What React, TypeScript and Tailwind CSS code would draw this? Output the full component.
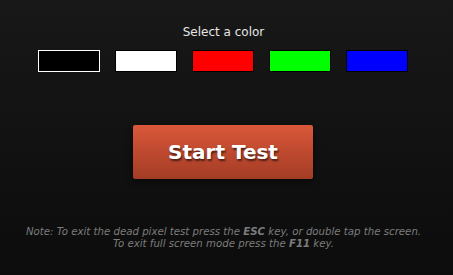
import React from "react";

export default function App() {
  const swatches = [
    { c: "bg-[#000000]", b: "border-white" },
    { c: "bg-[#ffffff]", b: "border-black" },
    { c: "bg-[#ff0000]", b: "border-black" },
    { c: "bg-[#00ff00]", b: "border-black" },
    { c: "bg-[#0000ff]", b: "border-black" },
  ];
  return (
    <div
      className="w-[453px] h-[275px] bg-gradient-to-b from-[#181818] to-[#0c0c0c] flex flex-col items-center"
      style={{ fontFamily: '"DejaVu Sans", Verdana, sans-serif' }}
    >
      <div className="mt-[24px] text-[12px] leading-[16px] text-[#e6e6e6] pr-[6px]">Select a color</div>
      <div className="mt-[10px] flex gap-[15px] pr-[7px]">
        {swatches.map((s, i) => (
          <div key={i} className={`w-[62px] h-[22px] border ${s.b} ${s.c}`} />
        ))}
      </div>
      <button
        className="mt-[53px] mr-[7px] w-[180px] h-[54px] rounded-[2px] bg-gradient-to-b from-[#da583a] to-[#a33c25] text-white font-bold text-[20px] shadow-[0_2px_6px_rgba(0,0,0,0.6)] [text-shadow:1px_2px_2px_rgba(0,0,0,0.6)]"
      >
        Start Test
      </button>
      <div className="mt-[47px] mr-[6px] text-center italic text-[10.2px] leading-[12px] text-[#7c7c7c]">
        <div>
          Note: To exit the dead pixel test press the <b>ESC</b> key, or double tap the screen.
        </div>
        <div>
          To exit full screen mode press the <b>F11</b> key.
        </div>
      </div>
    </div>
  );
}
